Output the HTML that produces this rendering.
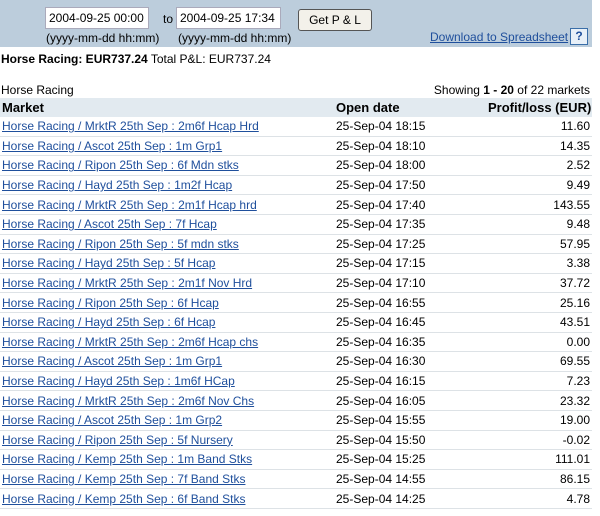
<!DOCTYPE html>
<html><head><style>
body{margin:0;width:600px;height:516px;overflow:hidden;background:#fff;font-family:"Liberation Sans",sans-serif;font-size:12px;color:#000;position:relative}
.a{position:absolute;white-space:nowrap}
.bar{position:absolute;left:0;top:0;width:592px;height:47px;background:#bccddc}
.in{position:absolute;background:#fff;height:20px;line-height:20px;padding-left:3px;font-size:12px;border:1px solid #aab}
.btn{position:absolute;left:298px;top:9px;width:72px;height:20px;border:1px solid #555;border-radius:3px;background:#f3f1ea;text-align:center;line-height:20px}
a{color:#1f4f9c;text-decoration:underline}
table{position:absolute;left:0;top:98px;width:592px;border-collapse:collapse;table-layout:fixed}
th{background:#e2eaf0;font-weight:bold;font-size:13px;text-align:left;height:19px;padding:0 2px;white-space:nowrap}
td{height:18.6px;border-bottom:1px solid #dde2e6;padding:0 2px;white-space:nowrap}
td:nth-child(2){padding-left:0}
.r{text-align:right}
</style></head><body>
<div class="bar"></div>
<div class="in" style="left:45px;top:7px;width:99px">2004-09-25 00:00</div>
<div class="a" style="left:163px;top:12px">to</div>
<div class="in" style="left:176px;top:7px;width:100px">2004-09-25 17:34</div>
<div class="btn">Get P &amp; L</div>
<div class="a" style="left:46px;top:31px">(yyyy-mm-dd hh:mm)</div>
<div class="a" style="left:178px;top:31px">(yyyy-mm-dd hh:mm)</div>
<div class="a" style="left:430px;top:30px"><a>Download to Spreadsheet</a></div>
<div class="a" style="left:570px;top:28px;width:16px;height:15px;border:1px solid #3a6ea8;background:#e8f0f8;color:#1f4f9c;font-weight:bold;text-align:center;line-height:15px">?</div>
<div class="a" style="left:1px;top:52px"><b>Horse Racing: EUR737.24</b> Total P&amp;L: EUR737.24</div>
<div class="a" style="left:1px;top:83px">Horse Racing</div>
<div class="a" style="right:10px;top:83px">Showing <b>1 - 20</b> of 22 markets</div>
<table>
<colgroup><col style="width:336px"><col style="width:150px"><col style="width:106px"></colgroup>
<tr><th>Market</th><th style="padding-left:0">Open date</th><th class="r">Profit/loss (EUR)</th></tr>
<tr><td><a>Horse Racing / MrktR 25th Sep : 2m6f Hcap Hrd</a></td><td>25-Sep-04 18:15</td><td class="r">11.60</td></tr>
<tr><td><a>Horse Racing / Ascot 25th Sep : 1m Grp1</a></td><td>25-Sep-04 18:10</td><td class="r">14.35</td></tr>
<tr><td><a>Horse Racing / Ripon 25th Sep : 6f Mdn stks</a></td><td>25-Sep-04 18:00</td><td class="r">2.52</td></tr>
<tr><td><a>Horse Racing / Hayd 25th Sep : 1m2f Hcap</a></td><td>25-Sep-04 17:50</td><td class="r">9.49</td></tr>
<tr><td><a>Horse Racing / MrktR 25th Sep : 2m1f Hcap hrd</a></td><td>25-Sep-04 17:40</td><td class="r">143.55</td></tr>
<tr><td><a>Horse Racing / Ascot 25th Sep : 7f Hcap</a></td><td>25-Sep-04 17:35</td><td class="r">9.48</td></tr>
<tr><td><a>Horse Racing / Ripon 25th Sep : 5f mdn stks</a></td><td>25-Sep-04 17:25</td><td class="r">57.95</td></tr>
<tr><td><a>Horse Racing / Hayd 25th Sep : 5f Hcap</a></td><td>25-Sep-04 17:15</td><td class="r">3.38</td></tr>
<tr><td><a>Horse Racing / MrktR 25th Sep : 2m1f Nov Hrd</a></td><td>25-Sep-04 17:10</td><td class="r">37.72</td></tr>
<tr><td><a>Horse Racing / Ripon 25th Sep : 6f Hcap</a></td><td>25-Sep-04 16:55</td><td class="r">25.16</td></tr>
<tr><td><a>Horse Racing / Hayd 25th Sep : 6f Hcap</a></td><td>25-Sep-04 16:45</td><td class="r">43.51</td></tr>
<tr><td><a>Horse Racing / MrktR 25th Sep : 2m6f Hcap chs</a></td><td>25-Sep-04 16:35</td><td class="r">0.00</td></tr>
<tr><td><a>Horse Racing / Ascot 25th Sep : 1m Grp1</a></td><td>25-Sep-04 16:30</td><td class="r">69.55</td></tr>
<tr><td><a>Horse Racing / Hayd 25th Sep : 1m6f HCap</a></td><td>25-Sep-04 16:15</td><td class="r">7.23</td></tr>
<tr><td><a>Horse Racing / MrktR 25th Sep : 2m6f Nov Chs</a></td><td>25-Sep-04 16:05</td><td class="r">23.32</td></tr>
<tr><td><a>Horse Racing / Ascot 25th Sep : 1m Grp2</a></td><td>25-Sep-04 15:55</td><td class="r">19.00</td></tr>
<tr><td><a>Horse Racing / Ripon 25th Sep : 5f Nursery</a></td><td>25-Sep-04 15:50</td><td class="r">-0.02</td></tr>
<tr><td><a>Horse Racing / Kemp 25th Sep : 1m Band Stks</a></td><td>25-Sep-04 15:25</td><td class="r">111.01</td></tr>
<tr><td><a>Horse Racing / Kemp 25th Sep : 7f Band Stks</a></td><td>25-Sep-04 14:55</td><td class="r">86.15</td></tr>
<tr><td><a>Horse Racing / Kemp 25th Sep : 6f Band Stks</a></td><td>25-Sep-04 14:25</td><td class="r">4.78</td></tr>
</table>
</body></html>
